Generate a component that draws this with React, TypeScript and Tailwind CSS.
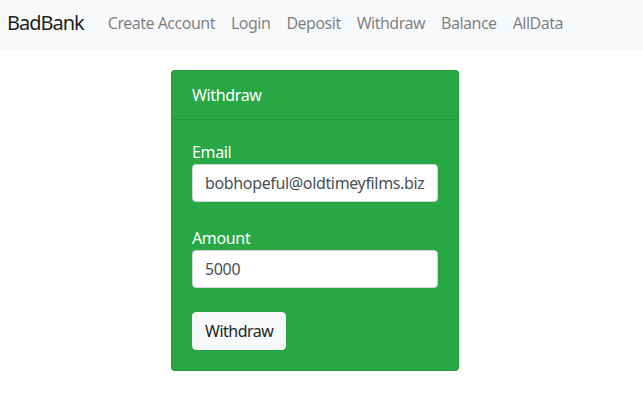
export default function App() {
  const links = ["Create Account", "Login", "Deposit", "Withdraw", "Balance", "AllData"];

  return (
    <div className="min-h-screen bg-white text-[#212529] font-['Noto_Sans',sans-serif]">
      <nav className="flex h-[50px] items-center bg-[#f8f9fa] px-[7px] pb-1">
        <span className="mr-4 text-[20px] leading-[30px] tracking-[-1px] text-black/90">BadBank</span>
        <div className="flex">
          {links.map((l) => (
            <a key={l} href="#" className="px-2 text-[16px] leading-6 tracking-[-0.5px] text-black/50">
              {l}
            </a>
          ))}
        </div>
      </nav>

      <div className="mt-5 ml-[171px] w-[288px] rounded-[4px] border border-black/10 bg-[#28a745] text-white tracking-[-0.35px]">
        <div className="border-b border-black/10 px-5 py-3 text-[16px] leading-6">Withdraw</div>
        <div className="p-5 text-[16px] leading-6">
          <div>Email</div>
          <div className="flex h-[38px] items-center rounded-[4px] border border-[#ced4da] bg-white px-3 text-[#495057] whitespace-nowrap overflow-hidden">
            bobhopeful@oldtimeyfilms.biz
          </div>
          <div className="h-6" />
          <div>Amount</div>
          <div className="flex h-[38px] items-center rounded-[4px] border border-[#ced4da] bg-white px-3 text-[#495057]">
            5000
          </div>
          <div className="h-6" />
          <button className="h-[38px] rounded-[4px] border border-[#f8f9fa] bg-[#f8f9fa] px-3 tracking-[-0.5px] text-[#212529]">
            Withdraw
          </button>
        </div>
      </div>
    </div>
  );
}
